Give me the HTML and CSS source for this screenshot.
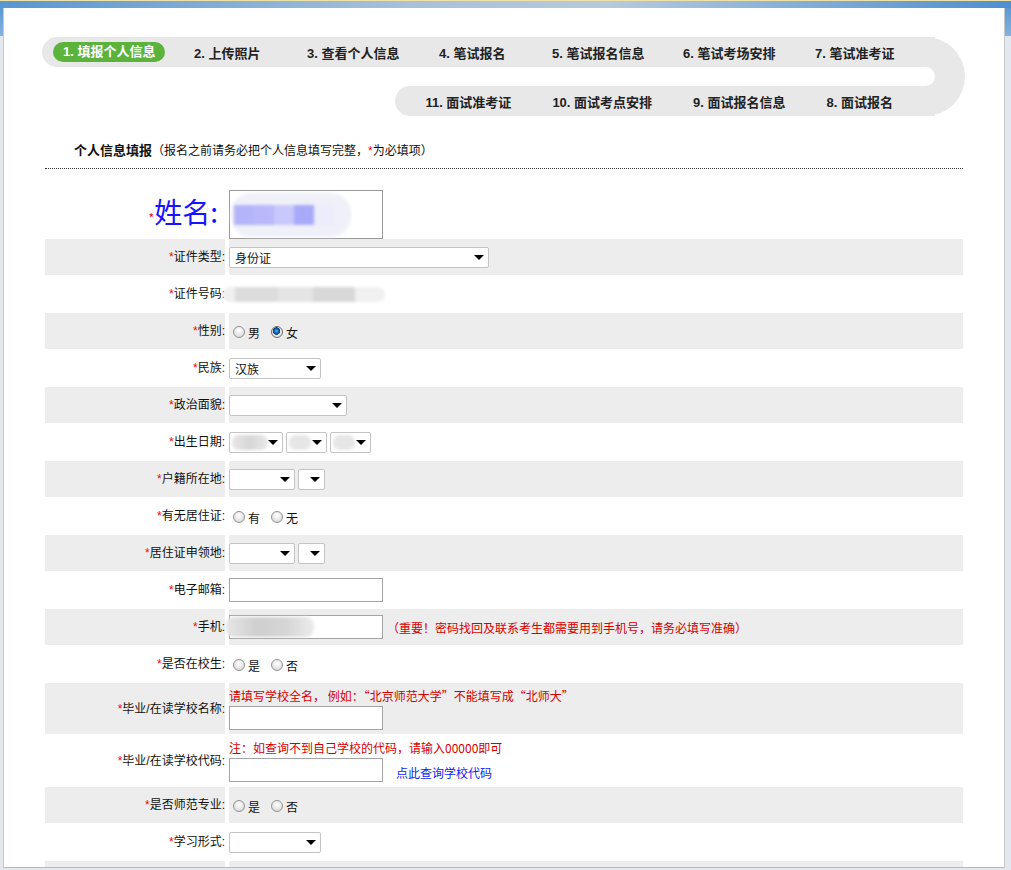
FILE: index.html
```html
<!DOCTYPE html>
<html>
<head>
    <meta charset="utf-8">
    <title>个人信息填报</title>
    <link rel="stylesheet" href="styles.css">
</head>
<body>
<div class="page">
    <div class="steps">
        <ul class="steps-row top">
            <li><span class="current">1. 填报个人信息</span></li>
            <li>2. 上传照片</li>
            <li>3. 查看个人信息</li>
            <li>4. 笔试报名</li>
            <li>5. 笔试报名信息</li>
            <li>6. 笔试考场安排</li>
            <li>7. 笔试准考证</li>
        </ul>
        <ul class="steps-row bottom">
            <li>11. 面试准考证</li>
            <li>10. 面试考点安排</li>
            <li>9. 面试报名信息</li>
            <li>8. 面试报名</li>
        </ul>
    </div>

    <div class="section-title"><b>个人信息填报</b>（报名之前请务必把个人信息填写完整，<span class="req">*</span>为必填项）</div>

    <div class="form">
        <div class="row name">
            <div class="label"><span class="req">*</span>姓名:</div>
            <div class="field"><div class="textbox big"><span class="mosaic m-name"></span></div></div>
        </div>
        <div class="row alt">
            <div class="label"><span class="req">*</span>证件类型:</div>
            <div class="field"><span class="select s-id">身份证</span></div>
        </div>
        <div class="row">
            <div class="label"><span class="req">*</span>证件号码:</div>
            <div class="field"><span class="mosaic m-id"></span></div>
        </div>
        <div class="row alt">
            <div class="label"><span class="req">*</span>性别:</div>
            <div class="field">
                <span class="choice"><span class="radio"></span>男</span>
                <span class="choice"><span class="radio checked"></span>女</span>
            </div>
        </div>
        <div class="row">
            <div class="label"><span class="req">*</span>民族:</div>
            <div class="field"><span class="select s-short">汉族</span></div>
        </div>
        <div class="row alt">
            <div class="label"><span class="req">*</span>政治面貌:</div>
            <div class="field"><span class="select s-politics"></span></div>
        </div>
        <div class="row">
            <div class="label"><span class="req">*</span>出生日期:</div>
            <div class="field">
                <span class="select s-year"><span class="mosaic m-date wide"></span></span>
                <span class="select s-day"><span class="mosaic m-date"></span></span>
                <span class="select s-day"><span class="mosaic m-date"></span></span>
            </div>
        </div>
        <div class="row alt">
            <div class="label"><span class="req">*</span>户籍所在地:</div>
            <div class="field"><span class="select s-prov"></span><span class="select s-city"></span></div>
        </div>
        <div class="row">
            <div class="label"><span class="req">*</span>有无居住证:</div>
            <div class="field">
                <span class="choice"><span class="radio"></span>有</span>
                <span class="choice"><span class="radio"></span>无</span>
            </div>
        </div>
        <div class="row alt">
            <div class="label"><span class="req">*</span>居住证申领地:</div>
            <div class="field"><span class="select s-prov"></span><span class="select s-city"></span></div>
        </div>
        <div class="row">
            <div class="label"><span class="req">*</span>电子邮箱:</div>
            <div class="field"><span class="textbox"></span></div>
        </div>
        <div class="row alt">
            <div class="label"><span class="req">*</span>手机:</div>
            <div class="field">
                <span class="textbox"><span class="mosaic m-phone"></span></span>
                <span class="hint note">（重要！密码找回及联系考生都需要用到手机号，请务必填写准确）</span>
            </div>
        </div>
        <div class="row">
            <div class="label"><span class="req">*</span>是否在校生:</div>
            <div class="field">
                <span class="choice"><span class="radio"></span>是</span>
                <span class="choice"><span class="radio"></span>否</span>
            </div>
        </div>
        <div class="row alt tall">
            <div class="label"><span class="req">*</span>毕业/在读学校名称:</div>
            <div class="field stack">
                <span class="hint">请填写学校全名， 例如：“北京师范大学”不能填写成“北师大”</span>
                <span class="textbox"></span>
            </div>
        </div>
        <div class="row tall">
            <div class="label"><span class="req">*</span>毕业/在读学校代码:</div>
            <div class="field stack">
                <span class="hint">注：如查询不到自己学校的代码，请输入00000即可</span>
                <div class="inline">
                    <span class="textbox"></span>
                    <a class="link" href="#">点此查询学校代码</a>
                </div>
            </div>
        </div>
        <div class="row alt">
            <div class="label"><span class="req">*</span>是否师范专业:</div>
            <div class="field">
                <span class="choice"><span class="radio"></span>是</span>
                <span class="choice"><span class="radio"></span>否</span>
            </div>
        </div>
        <div class="row">
            <div class="label"><span class="req">*</span>学习形式:</div>
            <div class="field"><span class="select s-short"></span></div>
        </div>
        <div class="row alt">
            <div class="label"></div>
            <div class="field"></div>
        </div>
    </div>
</div>
</body>
</html>
```

FILE: styles.css
```css
body {
    margin: 0;
    font-family: "Liberation Sans", "Noto Sans CJK SC", sans-serif;
    font-size: 12px;
    color: #111;
    background:
        linear-gradient(#efe2a6, #efe2a6) 0 0 / 100% 1px no-repeat,
        linear-gradient(to right, #5a96d2, #a8c0d8 40%, #b7cadc 60%, #4f8fd0) 0 1px / 100% 7px no-repeat,
        linear-gradient(#5c98d3, #86b3de) 0 8px / 100% 28px no-repeat,
        #e3e8ee;
}

.page {
    box-sizing: border-box;
    width: 1002px;
    height: 860px;
    margin: 8px 0 0 3px;
    padding-top: 29px;
    background: #fff;
    border-left: 1px solid #c6c8cc;
    border-right: 1px solid #c6c8cc;
    border-bottom: 1px solid #b5b9be;
    overflow: hidden;
}

/* step navigation */
.steps {
    position: relative;
    width: 923px;
    margin-left: 38px;
}

.steps::before {
    content: "";
    position: absolute;
    top: 0;
    right: 0;
    width: 80px;
    height: 79px;
    background: #e8e8e8;
    border-radius: 0 40px 40px 0;
}

.steps::after {
    content: "";
    position: absolute;
    top: 30px;
    right: 30px;
    width: 60px;
    height: 19px;
    background: #fff;
    border-radius: 0 10px 10px 0;
}

.steps-row {
    position: relative;
    list-style: none;
    margin: 0 30px 0 0;
    padding: 0;
    height: 30px;
    background: #e8e8e8;
    border-radius: 15px 0 0 15px;
    display: flex;
    align-items: center;
    font-size: 13px;
    font-weight: bold;
    color: #222;
    white-space: nowrap;
}

.steps-row.top {
    display: grid;
    grid-template-columns: 141px 113px 132px 113px 131px 132px auto;
    padding-left: 11px;
}

.steps-row.bottom {
    margin: 19px 30px 0 353px;
    justify-content: flex-end;
    gap: 41px;
    padding-right: 42px;
}

.current {
    display: inline-block;
    height: 20px;
    line-height: 20px;
    padding: 0 10px;
    border-radius: 10px;
    background: #5cb33b;
    color: #fff;
}

/* title */
.section-title {
    box-sizing: border-box;
    width: 918px;
    margin-left: 41px;
    padding: 25px 0 7px 29px;
    line-height: 20px;
    border-bottom: 1px dotted #333;
}

.section-title b {
    font-size: 13px;
}

.req {
    color: #f00;
    font-size: 12px;
}

/* form rows */
.form {
    display: flex;
    flex-direction: column;
    gap: 2px;
    width: 918px;
    margin: 2px 0 0 41px;
}

.row {
    display: grid;
    grid-template-columns: 180px 734px;
    column-gap: 4px;
    height: 35px;
}

.row.alt > div {
    background: #ededed;
}

.row.tall {
    height: 50px;
}

.label {
    box-sizing: border-box;
    padding-top: 1px;
    text-align: right;
    line-height: 35px;
    white-space: nowrap;
}

.tall .label {
    line-height: 50px;
}

.field {
    display: flex;
    align-items: center;
}

.row.name {
    height: 66px;
}

.row.name > div {
    box-sizing: border-box;
    padding-top: 16px;
}

.name .label {
    font-family: "Noto Sans CJK SC", sans-serif;
    font-size: 28px;
    line-height: 49px;
    color: #1414ff;
    padding-right: 7px;
}

.textbox {
    box-sizing: border-box;
    display: flex;
    align-items: center;
    width: 154px;
    height: 24px;
    border: 1px solid #a3a3a3;
    background: #fff;
}

.textbox.big {
    height: 49px;
    border-color: #9a9a9a;
}

.select {
    position: relative;
    box-sizing: border-box;
    display: inline-flex;
    align-items: center;
    height: 21px;
    padding-left: 5px;
    border: 1px solid #c4c4c4;
    border-radius: 2px;
    background: #fff;
}

.select::after {
    content: "";
    position: absolute;
    right: 4px;
    top: 7px;
    border-left: 5px solid transparent;
    border-right: 5px solid transparent;
    border-top: 5px solid #000;
}

.select + .select {
    margin-left: 3px;
}

.s-id { width: 260px; }
.s-short { width: 92px; }
.s-politics { width: 118px; }
.s-year { width: 54px; }
.s-day { width: 41px; }
.s-prov { width: 66px; }
.s-city { width: 27px; }

.choice {
    display: inline-flex;
    align-items: center;
    margin-right: 7px;
    padding-top: 2px;
}

.radio {
    box-sizing: border-box;
    width: 12px;
    height: 12px;
    margin: 0 3px 0 4px;
    border-radius: 50%;
    border: 1px solid #929292;
    background: radial-gradient(circle at 50% 35%, #fff, #d2d2d2);
}

.radio.checked {
    border-color: #6c6c6c;
    background:
        radial-gradient(circle at 45% 40%, #5fb0f0 0, #1769b8 2px, #0b3d74 3.5px, transparent 4px),
        radial-gradient(circle at 50% 35%, #fff, #d2d2d2);
}

.hint {
    font-family: "Noto Sans CJK SC", sans-serif;
    color: #d40000;
    line-height: 17px;
}

.note {
    margin-left: 4px;
}

.field.stack {
    flex-direction: column;
    align-items: flex-start;
    justify-content: center;
    gap: 2px;
}

.inline {
    display: flex;
    align-items: flex-end;
    gap: 13px;
}

.link {
    color: #0a1ef5;
    text-decoration: none;
    line-height: 16px;
}

/* privacy blur */
.mosaic {
    display: block;
    filter: blur(1.5px);
}

.m-name {
    width: 120px;
    height: 44px;
    margin-left: 1px;
    border-radius: 20px;
    background:
        linear-gradient(to right, #b4b4fa 0 20px, #b8b8fb 20px 40px, #c8c8fc 40px 60px, #a9a9fa 60px 80px, #ececfd 80px 100px) 3px 12px / 100px 20px no-repeat,
        #f0f0f8;
}

.m-id {
    width: 162px;
    height: 15px;
    margin-left: -6px;
    border-radius: 7px;
    background: linear-gradient(to right, #efefef 0 12px, #dcdcdc 12px 55px, #e4e4e4 55px 90px, #d8d8d8 90px 132px, #f1f1f1 132px);
}

.m-phone {
    width: 88px;
    height: 20px;
    margin-left: -4px;
    border-radius: 8px;
    background: linear-gradient(to right, #e6e6e6, #cfcfcf 35%, #d6d6d6 70%, #ececec);
}

.m-date {
    width: 22px;
    height: 15px;
    margin-left: -3px;
    border-radius: 7px;
    background: #e6e6e6;
}

.m-date.wide {
    width: 36px;
    background: linear-gradient(to right, #e6e6e6, #d6d6d6 50%, #e8e8e8);
}
```
